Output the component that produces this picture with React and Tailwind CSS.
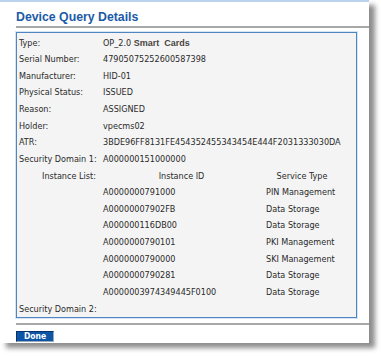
const fields = [
  ['Type:', null],
  ['Serial Number:', '4790507525260058739 8'.replace(' ', '')],
  ['Manufacturer:', 'HID-01'],
  ['Physical Status:', 'ISSUED'],
  ['Reason:', 'ASSIGNED'],
  ['Holder:', 'vpecms02'],
  ['ATR:', '3BDE96FF8131FE454352455343454E444F2031333030DA'],
  ['Security Domain 1:', 'A000000151000000'],
];

const instances = [
  ['A0000000791000', 'PIN Management'],
  ['A00000007902FB', 'Data Storage'],
  ['A000000116DB00', 'Data Storage'],
  ['A0000000790101', 'PKI Management'],
  ['A0000000790000', 'SKI Management'],
  ['A0000000790281', 'Data Storage'],
  ['A0000003974349445F0100', 'Data Storage'],
];

const body = { fontFamily: '"DejaVu Sans Condensed", "DejaVu Sans", sans-serif' };

function Row({ label, children }) {
  return (
    <div className="flex h-[16.625px] items-center">
      <div className="w-[84px] shrink-0 whitespace-nowrap">{label}</div>
      <div className="whitespace-nowrap">{children}</div>
    </div>
  );
}

export default function App() {
  return (
    <div className="w-[381px] h-[356px] bg-white">
      <div className="w-[369px] h-[343px] bg-white border-t-2 border-[#b9d3ee] shadow-[6px_5px_5px_rgba(0,0,0,0.45)]">
        <div className="pl-4 pt-[8px]">
          <h1
            className="text-[12.3px] font-bold text-[#1a5aa6] leading-[15px]"
            style={{ fontFamily: '"Liberation Sans", Arial, sans-serif' }}
          >
            Device Query Details
          </h1>
          <div className="mt-[1px] h-[2px] bg-[#a8a8a8]" />
          <div
            className="mt-[4px] w-[341px] h-[286px] border border-[#4f86c2] bg-[#f4f4f4] pl-[2px] pt-[2px] text-[9px] text-[#2a2a2a] shadow-[0_0_0_1px_#d6e4f3]"
            style={body}
          >
            <Row label="Type:">
              OP_2.0 <span className="font-bold text-[#4a4540]" style={{ fontFamily: '"Liberation Sans", Arial, sans-serif' }}>Smart&nbsp;&nbsp;Cards</span>
            </Row>
            {fields.slice(1).map(([l, v]) => (
              <Row key={l} label={l}>{v}</Row>
            ))}
            <div className="flex h-[16.625px] items-center">
              <div className="w-[84px] shrink-0 pl-[23px] whitespace-nowrap">Instance List:</div>
              <div className="w-[157px] text-center">Instance ID</div>
              <div className="w-[84px] text-center">Service Type</div>
            </div>
            {instances.map(([id, type]) => (
              <div key={id} className="flex h-[16.625px] items-center">
                <div className="w-[84px] shrink-0" />
                <div className="w-[163px] whitespace-nowrap">{id}</div>
                <div className="whitespace-nowrap">{type}</div>
              </div>
            ))}
            <div className="flex h-[18px] items-center">
              <div className="whitespace-nowrap">Security Domain 2:</div>
            </div>
          </div>
          <div className="mt-[5px] h-[2px] bg-[#a8a8a8]" />
          <button
            className="mt-[6px] w-[38px] h-[11px] flex items-center justify-center bg-[#0d56a6] border border-[#08336a] border-r-[#9ab] border-b-[#9ab] text-white text-[8.5px] font-bold leading-none"
            style={body}
          >
            Done
          </button>
        </div>
      </div>
    </div>
  );
}
